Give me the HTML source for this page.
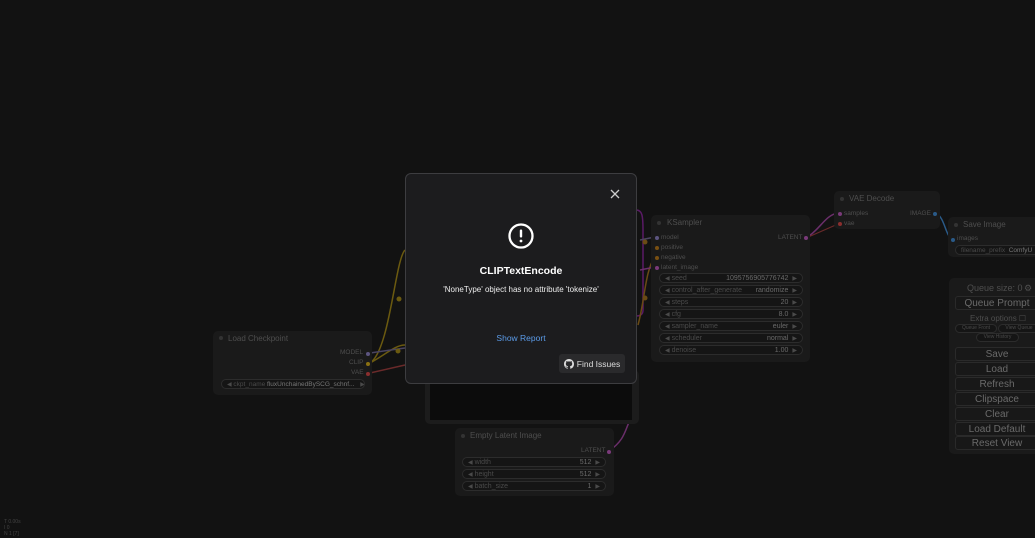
<!DOCTYPE html>
<html><head><meta charset="utf-8"><style>
*{box-sizing:border-box;margin:0;padding:0}
body{width:1035px;height:538px;background:#121212;overflow:hidden;position:relative;font-family:"Liberation Sans",sans-serif;color:#5a5a5a}
.n{position:absolute;background:#1a1a1a;border-radius:5px}
.t{position:absolute;font-size:8px;color:#4e4e4e;white-space:nowrap}
.dot{position:absolute;width:4px;height:4px;border-radius:50%}
.w{position:absolute;height:10px;border:1px solid #2c2c2c;background:#151515;border-radius:5px;font-size:7px;color:#4a4a4a;padding:0 5px;white-space:nowrap;overflow:hidden;display:flex;align-items:center}
.w b{font-weight:normal;margin-left:auto;color:#6a6a6a;margin-right:4px}
.w i{font-style:normal;font-size:6px}
.sm{position:absolute;height:9px;border:1px solid #2c2c2c;background:#151515;border-radius:5px;font-size:5px;color:#4a4a4a;text-align:center;line-height:7px;white-space:nowrap}
.btn{position:absolute;left:955px;width:84px;height:14px;border:1px solid #2a2a2a;background:#181818;border-radius:3px;font-size:10px;color:#6a6a6a;text-align:center;line-height:13px}
</style></head><body>
<svg width="1035" height="538" style="position:absolute;left:0;top:0">
<path d="M370 363 C390 350,395 260,405 250" stroke="#6b5a10" stroke-width="1.5" fill="none"/>
<path d="M370 363 C385 355,395 345,405 345" stroke="#6b5a10" stroke-width="1.5" fill="none"/>
<path d="M370 353 L405 348" stroke="#4a4460" stroke-width="1.5" fill="none"/>
<path d="M370 373 L405 365" stroke="#6a2a2a" stroke-width="1.5" fill="none"/>
<path d="M636 210 C642 210,643 215,643 230 L643 310 C643 315,640 316,636 316" stroke="#5a1a66" stroke-width="1.5" fill="none"/>
<path d="M640 240 L655 237" stroke="#4a4460" stroke-width="1.5"/>
<path d="M638 325 C645 300,645 270,655 257" stroke="#6a4a14" stroke-width="1.5" fill="none"/>
<path d="M640 270 L655 267" stroke="#6a2e6a" stroke-width="1.5"/>
<path d="M609 451 C625 440,625 430,630 420" stroke="#6a2e6a" stroke-width="1.5" fill="none"/>
<path d="M806 238 C820 230,825 215,838 213" stroke="#6a2e6a" stroke-width="1.5" fill="none"/>
<path d="M806 238 L838 224" stroke="#6a2a2a" stroke-width="1.2"/>
<path d="M936 213 C945 218,945 235,952 239" stroke="#2a5a88" stroke-width="1.5" fill="none"/>
<circle cx="399" cy="299" r="2.5" fill="#6b5a10"/><circle cx="398" cy="351" r="2.5" fill="#6b5a10"/>
<circle cx="645" cy="298" r="2.5" fill="#6a4a14"/><circle cx="645" cy="242" r="2.5" fill="#6a4a14"/>
</svg>
<div class="n" style="left:213px;top:331px;width:159px;height:64px"></div>
<div class="dot" style="left:219px;top:336px;background:#333"></div>
<div class="t" style="left:228px;top:334px">Load Checkpoint</div>
<div class="t" style="left:340px;top:349px;font-size:6.5px">MODEL</div><div class="dot" style="left:366px;top:352px;background:#5c5580"></div>
<div class="t" style="left:349px;top:359px;font-size:6.5px">CLIP</div><div class="dot" style="left:366px;top:362px;background:#8a7012"></div>
<div class="t" style="left:351px;top:369px;font-size:6.5px">VAE</div><div class="dot" style="left:366px;top:372px;background:#8a2e2e"></div>
<div class="w" style="left:221px;top:379px;width:144px;font-size:6.5px"><i>◀</i>&nbsp;ckpt_name&nbsp;<span style="color:#777">fluxUnchainedBySCG_schnf...</span><b>&nbsp;</b><i>▶</i></div>
<div class="n" style="left:425px;top:370px;width:214px;height:54px;background:#1c1c1c"></div>
<div style="position:absolute;left:430px;top:383px;width:202px;height:37px;background:#0c0c0c"></div>
<div class="n" style="left:455px;top:428px;width:159px;height:68px"></div>
<div class="dot" style="left:461px;top:434px;background:#333"></div>
<div class="t" style="left:470px;top:431px">Empty Latent Image</div>
<div class="t" style="left:581px;top:447px;font-size:6.5px">LATENT</div><div class="dot" style="left:607px;top:450px;background:#7a3a7a"></div>
<div class="w" style="left:462px;top:457px;width:144px"><i>◀</i>&nbsp;width<b>512</b><i>▶</i></div>
<div class="w" style="left:462px;top:469px;width:144px"><i>◀</i>&nbsp;height<b>512</b><i>▶</i></div>
<div class="w" style="left:462px;top:481px;width:144px"><i>◀</i>&nbsp;batch_size<b>1</b><i>▶</i></div>
<div class="n" style="left:651px;top:215px;width:159px;height:147px"></div>
<div class="dot" style="left:657px;top:221px;background:#333"></div>
<div class="t" style="left:667px;top:218px">KSampler</div>
<div class="dot" style="left:655px;top:236px;background:#5c5580"></div><div class="t" style="left:661px;top:234px;font-size:6.5px">model</div>
<div class="dot" style="left:655px;top:246px;background:#7a5012"></div><div class="t" style="left:661px;top:244px;font-size:6.5px">positive</div>
<div class="dot" style="left:655px;top:256px;background:#7a5012"></div><div class="t" style="left:661px;top:254px;font-size:6.5px">negative</div>
<div class="dot" style="left:655px;top:266px;background:#7a3a7a"></div><div class="t" style="left:661px;top:264px;font-size:6.5px">latent_image</div>
<div class="t" style="left:778px;top:234px;font-size:6.5px">LATENT</div><div class="dot" style="left:804px;top:236px;background:#7a3a7a"></div>
<div class="w" style="left:659px;top:273px;width:144px"><i>◀</i>&nbsp;seed<b>1095756905776742</b><i>▶</i></div>
<div class="w" style="left:659px;top:285px;width:144px"><i>◀</i>&nbsp;control_after_generate<b>randomize</b><i>▶</i></div>
<div class="w" style="left:659px;top:297px;width:144px"><i>◀</i>&nbsp;steps<b>20</b><i>▶</i></div>
<div class="w" style="left:659px;top:309px;width:144px"><i>◀</i>&nbsp;cfg<b>8.0</b><i>▶</i></div>
<div class="w" style="left:659px;top:321px;width:144px"><i>◀</i>&nbsp;sampler_name<b>euler</b><i>▶</i></div>
<div class="w" style="left:659px;top:333px;width:144px"><i>◀</i>&nbsp;scheduler<b>normal</b><i>▶</i></div>
<div class="w" style="left:659px;top:345px;width:144px"><i>◀</i>&nbsp;denoise<b>1.00</b><i>▶</i></div>
<div class="n" style="left:834px;top:191px;width:106px;height:38px"></div>
<div class="dot" style="left:840px;top:197px;background:#333"></div>
<div class="t" style="left:849px;top:194px">VAE Decode</div>
<div class="dot" style="left:838px;top:212px;background:#7a3a7a"></div><div class="t" style="left:844px;top:210px;font-size:6.5px">samples</div>
<div class="dot" style="left:838px;top:222px;background:#8a2e2e"></div><div class="t" style="left:844px;top:220px;font-size:6.5px">vae</div>
<div class="t" style="left:910px;top:210px;font-size:6.5px">IMAGE</div><div class="dot" style="left:933px;top:212px;background:#2a5a88"></div>
<div class="n" style="left:948px;top:217px;width:100px;height:40px"></div>
<div class="dot" style="left:954px;top:223px;background:#333"></div>
<div class="t" style="left:963px;top:220px">Save Image</div>
<div class="dot" style="left:951px;top:238px;background:#2a5a88"></div><div class="t" style="left:957px;top:235px;font-size:6.5px">images</div>
<div class="w" style="left:955px;top:245px;width:90px;font-size:6.5px">filename_prefix&nbsp;&nbsp;<span style="color:#777">ComfyU</span></div>
<div class="n" style="left:949px;top:278px;width:100px;height:176px"></div>
<div class="t" style="left:967px;top:283px;font-size:9px">Queue size: 0</div>
<div class="t" style="left:1024px;top:283px;font-size:9px">⚙</div>
<div class="btn" style="top:296px">Queue Prompt</div>
<div class="t" style="left:970px;top:314px;font-size:8px">Extra options ☐</div>
<div class="sm" style="left:955px;top:324px;width:42px">Queue Front</div>
<div class="sm" style="left:998px;top:324px;width:42px">View Queue</div>
<div class="sm" style="left:976px;top:333px;width:43px">View History</div>
<div class="btn" style="top:347px">Save</div>
<div class="btn" style="top:362px">Load</div>
<div class="btn" style="top:377px">Refresh</div>
<div class="btn" style="top:392px">Clipspace</div>
<div class="btn" style="top:407px">Clear</div>
<div class="btn" style="top:422px">Load Default</div>
<div class="btn" style="top:436px">Reset View</div>
<div class="t" style="left:4px;top:519px;font-size:5px;line-height:6px;color:#444">T 0.00s<br>I 0<br>N 1 [7]</div>
<div style="position:absolute;left:405px;top:173px;width:232px;height:211px;background:#1c1c1e;border:1px solid #3d3d40;border-radius:6px"></div>
<svg width="12" height="12" style="position:absolute;left:609px;top:188px"><path d="M2 2L10 10M10 2L2 10" stroke="#ccc" stroke-width="1.3"/></svg>
<svg width="28" height="28" style="position:absolute;left:507px;top:222px"><circle cx="14" cy="14" r="11.5" stroke="#fff" stroke-width="2.3" fill="none"/><rect x="12.8" y="7.5" width="2.4" height="8" rx="1" fill="#fff"/><circle cx="14" cy="19" r="1.4" fill="#fff"/></svg>
<div style="position:absolute;left:405px;top:265px;width:232px;text-align:center;font-size:10.5px;font-weight:bold;color:#fff">CLIPTextEncode</div>
<div style="position:absolute;left:405px;top:285px;width:232px;text-align:center;font-size:8px;color:#eee">'NoneType' object has no attribute 'tokenize'</div>
<div style="position:absolute;left:405px;top:333px;width:232px;text-align:center;font-size:8.5px;color:#5b9be8">Show Report</div>
<div style="position:absolute;left:559px;top:354px;width:66px;height:19px;background:#2a2a2c;border-radius:3px;font-size:8.5px;color:#ddd;display:flex;align-items:center;justify-content:center;gap:3px"><svg width="10" height="10" viewBox="0 0 16 16"><path fill="#ddd" d="M8 0C3.58 0 0 3.58 0 8c0 3.54 2.290 6.53 5.47 7.59.4.07.55-.17.55-.38v-1.33c-2.230.48-2.700-1.070-2.700-1.070-.36-.92-.89-1.170-.89-1.170-.73-.5.06-.49.06-.49.8.06 1.230.83 1.230.83.72 1.220 1.870.87 2.330.66.07-.52.28-.87.5-1.070-1.780-.2-3.640-.89-3.640-3.950 0-.87.31-1.590.82-2.150-.08-.2-.36-1.020.08-2.120 0 0 .67-.21 2.200.82a7.6 7.6 0 014 0c1.530-1.040 2.200-.82 2.200-.82.44 1.100.16 1.920.08 2.120.51.56.82 1.270.82 2.150 0 3.070-1.870 3.750-3.650 3.950.29.25.54.73.54 1.480v2.200c0 .21.15.46.55.38A8 8 0 0016 8c0-4.420-3.580-8-8-8z"/></svg>Find Issues</div>
</body></html>
